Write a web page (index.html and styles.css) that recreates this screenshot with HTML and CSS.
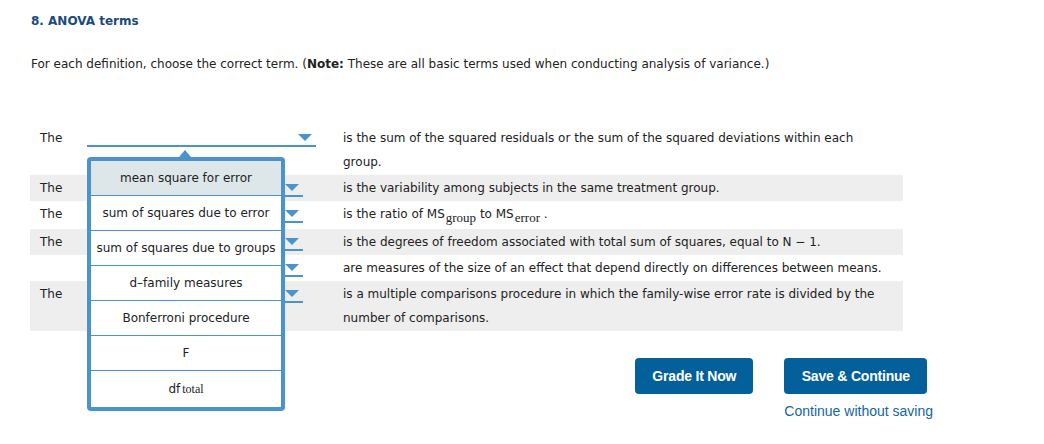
FILE: index.html
```html
<!DOCTYPE html>
<html>
<head>
<meta charset="utf-8">
<link rel="stylesheet" href="styles.css">
</head>
<body>
<div class="page">
  <h2 class="title">8. ANOVA terms</h2>
  <p class="instr">For each definition, choose the correct term. (<b>Note:</b> These are all basic terms used when conducting analysis of variance.)</p>

  <div class="rows">
    <div class="row">
      <div class="the">The</div>
      <div class="sel-cell">
        <div class="select wide"><span class="arrow"></span></div>
        <div class="menu">
          <div class="item active">mean square for error</div>
          <div class="item">sum of squares due to error</div>
          <div class="item">sum of squares due to groups</div>
          <div class="item">d–family measures</div>
          <div class="item">Bonferroni procedure</div>
          <div class="item">F</div>
          <div class="item">df<sub class="ssub">total</sub></div>
        </div>
      </div>
      <div class="def">is the sum of the squared residuals or the sum of the squared deviations within each group.</div>
    </div>
    <div class="row alt">
      <div class="the">The</div>
      <div class="sel-cell"><div class="select"><span class="arrow"></span></div></div>
      <div class="def">is the variability among subjects in the same treatment group.</div>
    </div>
    <div class="row with-sub">
      <div class="the">The</div>
      <div class="sel-cell"><div class="select"><span class="arrow"></span></div></div>
      <div class="def">is the ratio of MS<sub class="ssub">group</sub> to MS<sub class="ssub">error</sub> .</div>
    </div>
    <div class="row alt">
      <div class="the">The</div>
      <div class="sel-cell"><div class="select"><span class="arrow"></span></div></div>
      <div class="def">is the degrees of freedom associated with total sum of squares, equal to N − 1.</div>
    </div>
    <div class="row">
      <div class="the"></div>
      <div class="sel-cell"><div class="select"><span class="arrow"></span></div></div>
      <div class="def">are measures of the size of an effect that depend directly on differences between means.</div>
    </div>
    <div class="row alt">
      <div class="the">The</div>
      <div class="sel-cell"><div class="select"><span class="arrow"></span></div></div>
      <div class="def">is a multiple comparisons procedure in which the family-wise error rate is divided by the number of comparisons.</div>
    </div>
  </div>

  <div class="actions">
    <div class="btn grade">Grade It Now</div>
    <div class="save-col">
      <div class="btn save">Save &amp; Continue</div>
      <div class="link">Continue without saving</div>
    </div>
  </div>
</div>
</body>
</html>
```

FILE: styles.css
```css
html, body {
  margin: 0;
  background: #fff;
}
body {
  min-height: 100vh;
  font-family: "DejaVu Sans", Verdana, sans-serif;
  font-size: 12px;
  color: #222;
}
.page {
  padding: 14px 0 0 30px;
}
.title {
  margin: 0;
  padding-left: 1px;
  font-size: 12px;
  font-weight: bold;
  line-height: 14px;
  color: #1c4a7e;
}
.instr {
  margin: 29px 0 0;
  padding-left: 1px;
  line-height: 14px;
}
.rows {
  margin-top: 54px;
  width: 873px;
}
.row {
  display: flex;
  align-items: flex-start;
  padding: 1px 0;
  line-height: 24px;
}
.row.with-sub {
  padding-bottom: 3px;
}
.row.alt {
  background: #eeeeee;
}
.the {
  width: 47px;
  padding-left: 10px;
}
.sel-cell {
  width: 256px;
  position: relative;
}
.select {
  position: relative;
  width: 216px;
  height: 19px;
  border-bottom: 2px solid #4b93cd;
}
.select.wide {
  width: 229px;
}
.arrow {
  position: absolute;
  right: 4px;
  top: 8px;
  width: 0;
  height: 0;
  border-left: 7px solid transparent;
  border-right: 7px solid transparent;
  border-top: 7px solid #4b93cd;
}
.def {
  flex: 1;
  padding-right: 12px;
}
.ssub {
  font-family: "Liberation Serif", "Times New Roman", serif;
  font-size: 13px;
  vertical-align: -4px;
  line-height: 0;
  margin-left: 1px;
}
.menu {
  position: absolute;
  z-index: 10;
  top: 31px;
  left: 0;
  width: 198px;
  height: 254px;
  box-sizing: border-box;
  border: 4px solid #4b93cd;
  border-radius: 4px;
  background: #fff;
  display: flex;
  flex-direction: column;
  line-height: 16px;
}
.menu::before {
  content: "";
  position: absolute;
  top: -11px;
  left: 88px;
  width: 0;
  height: 0;
  border-left: 6px solid transparent;
  border-right: 6px solid transparent;
  border-bottom: 7px solid #4b93cd;
}
.item {
  height: 34px;
  flex: none;
  border-bottom: 1px solid #4b93cd;
  display: flex;
  align-items: center;
  justify-content: center;
  white-space: nowrap;
}
.item:last-child {
  border-bottom: 0;
  flex: 1;
}
.item.active {
  background: #dde7e9;
}
.item .ssub {
  font-size: 12px;
  margin-left: 2px;
  vertical-align: -5px;
}
.actions {
  display: flex;
  justify-content: flex-end;
  align-items: flex-start;
  gap: 31px;
  padding-right: 111px;
  margin-top: 27px;
}
.btn {
  font-family: "Liberation Sans", Arial, Helvetica, sans-serif;
  font-weight: bold;
  font-size: 14px;
  color: #fff;
  background: #03609a;
  border-radius: 4px;
  height: 36px;
  display: flex;
  align-items: center;
  justify-content: center;
  letter-spacing: -0.2px;
}
.grade {
  width: 118px;
}
.save {
  width: 143px;
}
.link {
  margin-top: 9px;
  font-family: "Liberation Sans", Arial, Helvetica, sans-serif;
  font-size: 14px;
  line-height: 16px;
  color: #1565a0;
}
```
